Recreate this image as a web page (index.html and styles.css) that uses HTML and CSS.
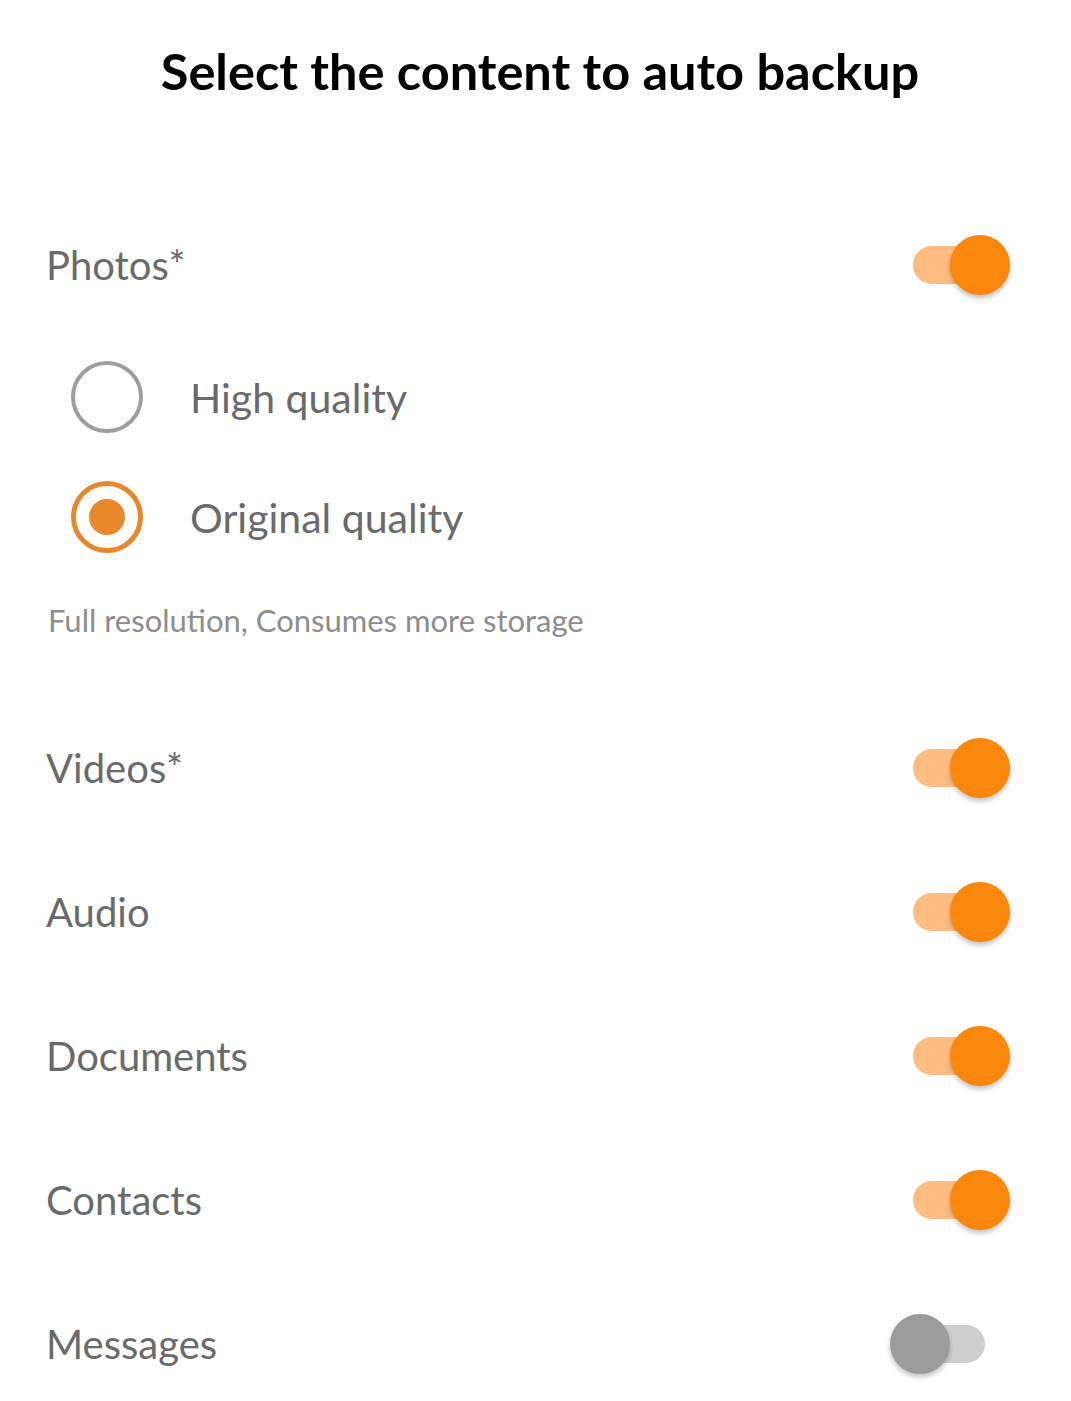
FILE: index.html
```html
<!DOCTYPE html>
<html>
<head>
    <meta charset="UTF-8">
    <meta name="viewport" content="width=device-width, initial-scale=1.0">
    <link rel="stylesheet" href="styles.css">
</head>
<body>
    <div class="header">
        <h1>Select the content to auto backup</h1>
    </div>

    <div class="list">
        <div class="switch-container">
            <span class="switch-label">Photos*</span>
            <label class="switch">
                <input type="checkbox" id="photos" checked>
                <span class="slider"></span>
            </label>
        </div>

        <div class="quality-group">
            <label class="radio-row">
                <input type="radio" name="quality" value="high">
                <span class="radio-mark"></span>
                <span class="radio-label">High quality</span>
            </label>
            <label class="radio-row">
                <input type="radio" name="quality" value="original" checked>
                <span class="radio-mark"></span>
                <span class="radio-label">Original quality</span>
            </label>
        </div>

        <div class="quality-note">Full resolution, Consumes more storage</div>

        <div class="switch-container">
            <span class="switch-label">Videos*</span>
            <label class="switch">
                <input type="checkbox" id="videos" checked>
                <span class="slider"></span>
            </label>
        </div>

        <div class="switch-container">
            <span class="switch-label">Audio</span>
            <label class="switch">
                <input type="checkbox" id="audio" checked>
                <span class="slider"></span>
            </label>
        </div>

        <div class="switch-container">
            <span class="switch-label">Documents</span>
            <label class="switch">
                <input type="checkbox" id="documents" checked>
                <span class="slider"></span>
            </label>
        </div>

        <div class="switch-container">
            <span class="switch-label">Contacts</span>
            <label class="switch">
                <input type="checkbox" id="contacts" checked>
                <span class="slider"></span>
            </label>
        </div>

        <div class="switch-container">
            <span class="switch-label">Messages</span>
            <label class="switch">
                <input type="checkbox" id="messages">
                <span class="slider"></span>
            </label>
        </div>
    </div>
</body>
</html>
```

FILE: styles.css
```css
body {
    margin: 0;
    background-color: #fff;
    font-family: Lato, "Noto Sans", sans-serif;
}

.header {
    height: 140px;
    display: flex;
    align-items: center;
    justify-content: center;
    padding-left: 9px;
    margin-bottom: 53px;
}

.header h1 {
    margin: 0;
    font-size: 50.5px;
    font-weight: bold;
    color: #000;
}

.switch-container {
    display: flex;
    align-items: center;
    justify-content: space-between;
    height: 144px;
    padding: 0 61px 0 46px;
}

.switch-label {
    font-size: 40px;
    color: #6a6a6a;
}

.switch {
    position: relative;
    display: inline-block;
    width: 120px;
    height: 60px;
    cursor: pointer;
}

.switch input {
    opacity: 0;
    width: 0;
    height: 0;
    position: absolute;
}

.slider {
    position: absolute;
    top: 11px;
    left: 23px;
    right: 25px;
    height: 38px;
    border-radius: 19px;
    background-color: #cfcfcf;
    transition: .3s;
}

.slider:before {
    position: absolute;
    content: "";
    width: 60px;
    height: 60px;
    left: -23px;
    top: -11px;
    border-radius: 50%;
    background-color: #9b9b9b;
    box-shadow: 0 3px 5px rgba(0, 0, 0, 0.25);
    transition: .3s;
}

input:checked + .slider {
    background-color: #ffbc80;
}

input:checked + .slider:before {
    background-color: #fb860c;
    transform: translateX(60px);
}

.radio-row {
    display: flex;
    align-items: center;
    height: 120px;
    padding-left: 71px;
    cursor: pointer;
}

.radio-row input {
    opacity: 0;
    width: 0;
    height: 0;
    position: absolute;
}

.radio-mark {
    box-sizing: border-box;
    width: 72px;
    height: 72px;
    border: 4px solid #9e9e9e;
    border-radius: 50%;
    display: flex;
    align-items: center;
    justify-content: center;
    margin-right: 47px;
}

.radio-row input:checked + .radio-mark {
    border: 5px solid #e8882a;
}

.radio-row input:checked + .radio-mark:after {
    content: "";
    width: 36px;
    height: 36px;
    border-radius: 50%;
    background-color: #e8882a;
}

.radio-label {
    font-size: 41px;
    color: #6a6a6a;
}

.quality-note {
    padding: 23px 0 56px 48px;
    line-height: 40px;
    font-size: 31px;
    color: #8d8d8d;
}
```
